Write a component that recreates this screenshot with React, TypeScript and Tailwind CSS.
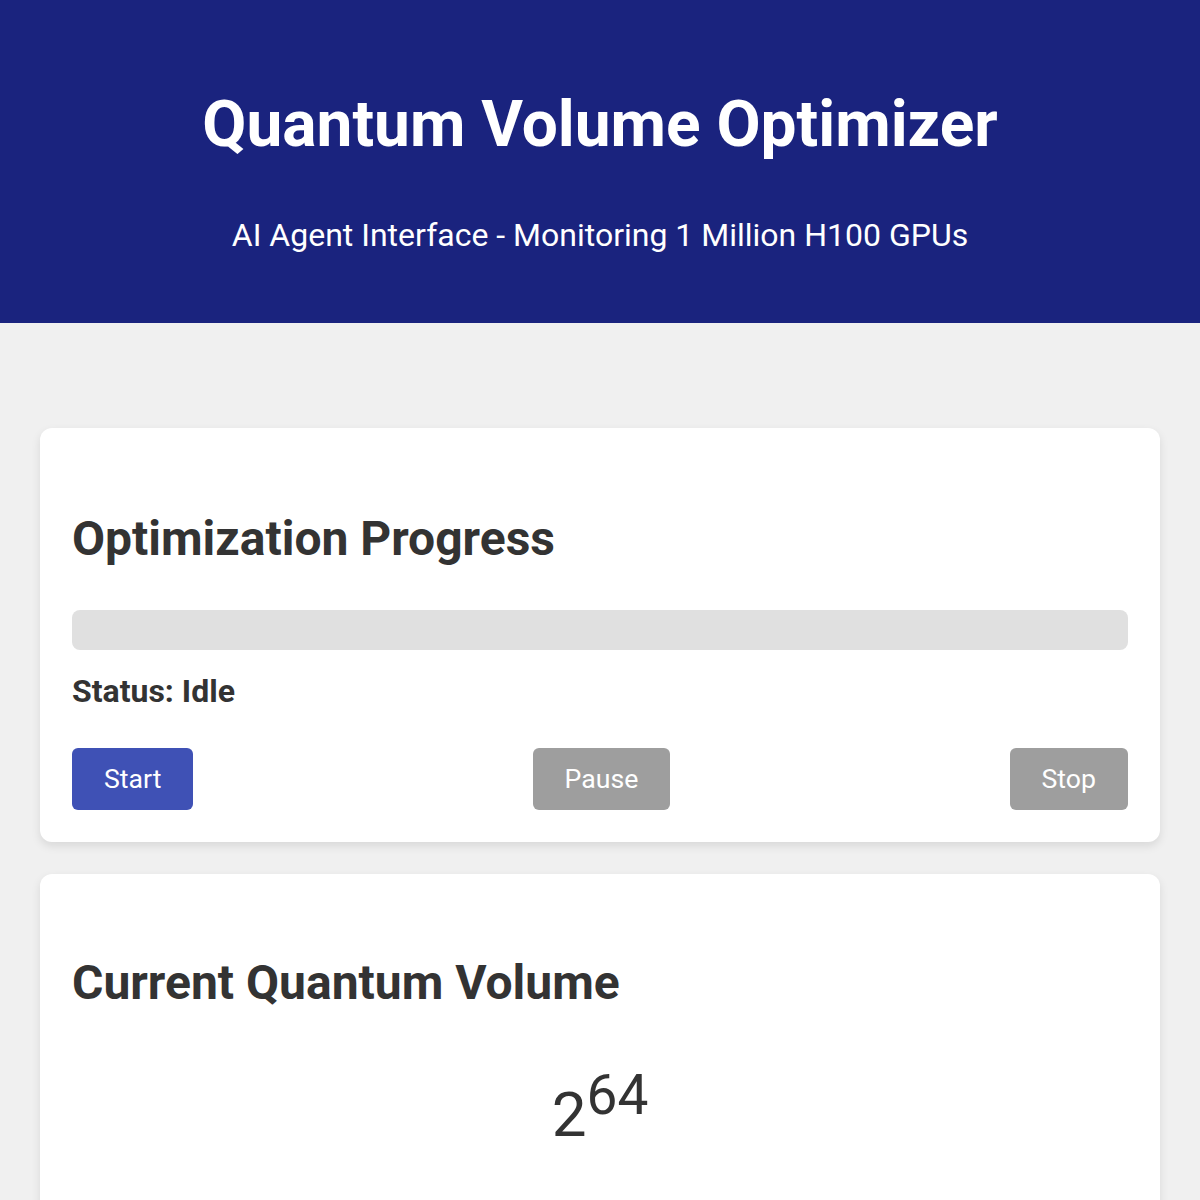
const font = { fontFamily: "Roboto, 'Liberation Sans', sans-serif" };

function Button({ label, active }: { label: string; active?: boolean }) {
  return (
    <button
      className={
        active
          ? "h-[62px] px-8 rounded-md bg-[#3f51b5] text-white text-[26.67px]"
          : "h-[62px] px-8 rounded-md bg-[#9e9e9e] text-white text-[26.67px]"
      }
    >
      {label}
    </button>
  );
}

export default function App() {
  return (
    <div className="min-h-[1200px] bg-[#f0f0f0] text-[#333]" style={font}>
      {/* Header */}
      <header className="bg-[#1a237e] text-white text-center pt-[89px] pb-[68px]">
        <h1 className="text-[64px] leading-[72px] font-bold">Quantum Volume Optimizer</h1>
        <p className="mt-[54px] text-[32px] leading-[40px]">
          AI Agent Interface - Monitoring 1 Million H100 GPUs
        </p>
      </header>

      <main className="px-10 pt-[105px] flex flex-col gap-8">
        {/* Progress card */}
        <section className="bg-white rounded-xl shadow-[0_4px_10px_rgba(0,0,0,0.1)] px-8 pt-[83px] pb-8">
          <h2 className="text-[48px] leading-[56px] font-bold">Optimization Progress</h2>
          <div className="mt-[43px] h-10 rounded-lg bg-[#e0e0e0]" />
          <p className="mt-[21px] text-[32px] leading-[40px] font-bold">Status: Idle</p>
          <div className="mt-[37px] flex justify-between">
            <Button label="Start" active />
            <Button label="Pause" />
            <Button label="Stop" />
          </div>
        </section>

        {/* Volume card */}
        <section className="bg-white rounded-xl shadow-[0_4px_10px_rgba(0,0,0,0.1)] px-8 pt-[81px] pb-16">
          <h2 className="text-[48px] leading-[56px] font-bold">Current Quantum Volume</h2>
          <div className="mt-[68px] text-center text-[62px] leading-[72px]">
            2<sup className="text-[55px] -top-[22px]">64</sup>
          </div>
        </section>
      </main>
    </div>
  );
}
